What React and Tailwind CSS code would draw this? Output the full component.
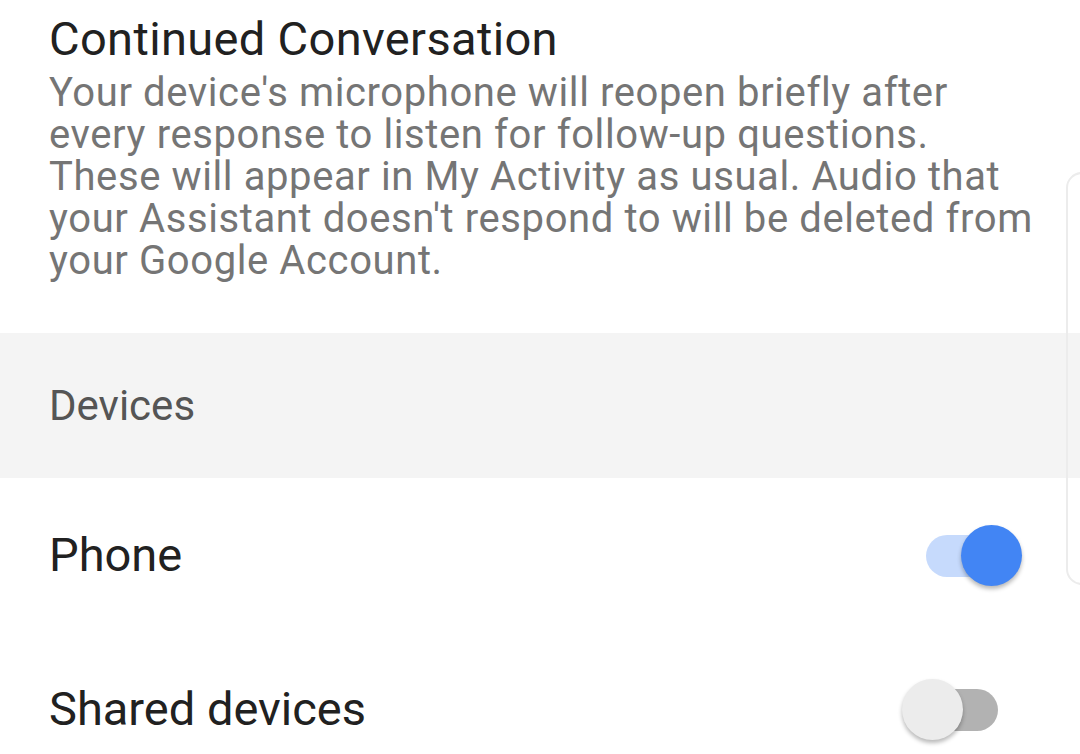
import React, { useState } from 'react';

const lines = [
    "Your device's microphone will reopen briefly after",
    "every response to listen for follow-up questions.",
    "These will appear in My Activity as usual. Audio that",
    "your Assistant doesn't respond to will be deleted from",
    "your Google Account.",
]

const Toggle = ({ on, onClick }) => {
    return (
        <button onClick={onClick} className="relative w-[120px] h-[61px] shrink-0 outline-none">
            <span className={`absolute left-[24px] top-[10px] w-[72px] h-[42px] rounded-full ${on ? 'bg-[#c6dafc]' : 'bg-[#b2b2b2]'}`} />
            <span
                className={`absolute top-0 w-[61px] h-[61px] rounded-full shadow-[0_3px_4px_rgba(0,0,0,0.28)] ${on ? 'left-[59px] bg-[#4285f4]' : 'left-0 bg-[#ececec]'}`}
            />
        </button>
    )
}

const App = () => {
    const [phone, setPhone] = useState(true)
    const [shared, setShared] = useState(false)

    return (
        <div className="relative w-[1080px] h-[754px] overflow-hidden bg-white font-['Roboto',sans-serif]">
            {/* continued conversation */}
            <div className="pl-[49px] pt-[11px]">
                <h1 className="text-[47px] leading-[56px] tracking-[0.35px] text-[#212121]">Continued Conversation</h1>
                <p className="mt-[5px] text-[40px] leading-[42px] tracking-[0.6px] text-[#757575]">
                    {lines.map((l, i) => (
                        <span key={i} className="block whitespace-nowrap">{l}</span>
                    ))}
                </p>
            </div>

            {/* devices header */}
            <div className="mt-[51px] h-[145px] bg-[#f4f4f4] flex items-center pl-[49px]">
                <span className="text-[42px] text-[#555555]">Devices</span>
            </div>

            {/* phone */}
            <div className="h-[154px] flex items-center justify-between pl-[49px] pr-[58px]">
                <span className="text-[47px] text-[#212121]">Phone</span>
                <Toggle on={phone} onClick={() => setPhone(!phone)} />
            </div>

            {/* shared devices */}
            <div className="h-[154px] flex items-center justify-between pl-[49px] pr-[58px]">
                <span className="text-[47px] text-[#212121]">Shared devices</span>
                <Toggle on={shared} onClick={() => setShared(!shared)} />
            </div>

            {/* card edge peeking in from the right */}
            <div className="absolute left-[1066px] top-[172px] w-[40px] h-[413px] rounded-[16px] border-2 border-[#ececec] pointer-events-none" />
        </div>
    )
}

export default App
